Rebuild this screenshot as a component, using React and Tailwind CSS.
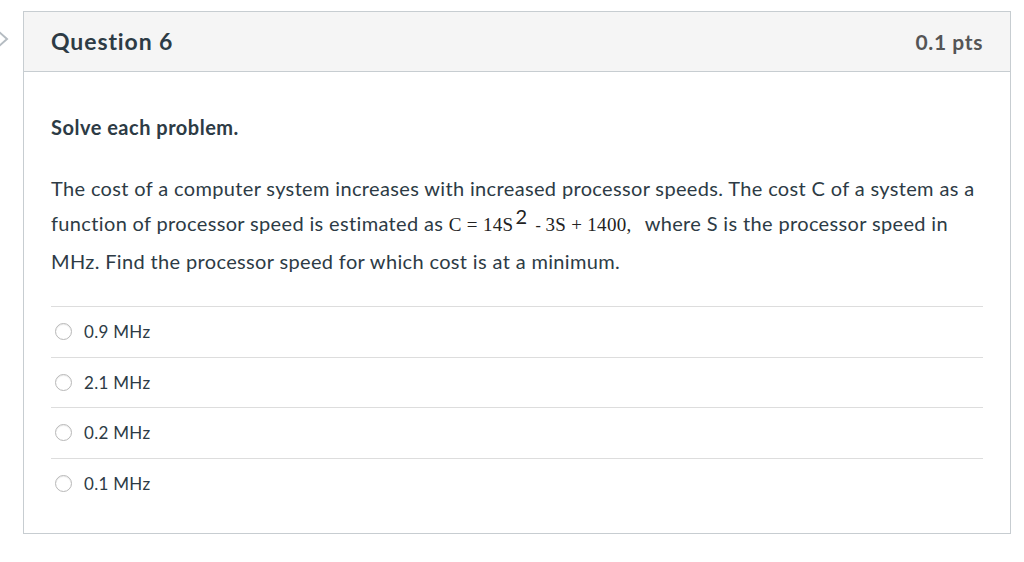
import React from "react";

const options = ["0.9 MHz", "2.1 MHz", "0.2 MHz", "0.1 MHz"];

const App = () => {
  return (
    <div
      className="relative w-[1024px] h-[562px] bg-white overflow-hidden"
      style={{ fontFamily: "Lato, 'Liberation Sans', sans-serif" }}
    >
      {/* previous-question chevron, cut off at the edge */}
      <svg className="absolute left-[-6px] top-[29px]" width="18" height="20" viewBox="0 0 18 20">
        <path d="M4 2 L13 10 L4 18" fill="none" stroke="#b5bcc2" strokeWidth="2" />
      </svg>

      <div className="ml-[23px] mt-[11px] w-[988px] h-[523px] border border-[#c7cdd1]">
        {/* Header */}
        <div className="h-[60px] bg-[#f5f5f5] border-b border-[#c7cdd1] flex items-center justify-between pl-[27px] pr-[27px]">
          <h2 className="text-[23px] font-bold text-[#2d3b45] tracking-[0.9px]">Question 6</h2>
          <span className="text-[21px] font-bold text-[#555555] tracking-[0.6px]">0.1 pts</span>
        </div>

        {/* Body */}
        <div className="px-[27px] pt-[42px] text-[#2d3b45]">
          <p className="text-[20px] font-bold leading-[26px] tracking-[0.5px]">Solve each problem.</p>

          <p className="mt-[31px] text-[20px] leading-[35px] tracking-[0.35px]">
            The cost of a computer system increases with increased processor speeds. The cost C of a system as a
            function of processor speed is estimated as{" "}
            <span
              className="inline-block text-[19px] leading-[36px] text-[#222] tracking-[0.3px] mr-[8px]"
              style={{ fontFamily: "'Liberation Serif', serif" }}
            >
              C = 14S
              <sup className="text-[20px] relative top-[-7px] ml-[2px] mr-[4px]" style={{ fontFamily: "Lato, sans-serif" }}>2</sup>
              <span className="text-[16px]"> - </span>3S + 1400,
            </span>{" "}
            where S is the processor speed in MHz. Find the processor speed for which cost is at a minimum.
          </p>

          <div className="mt-[27px]">
            {options.map((opt) => (
              <div key={opt} className="h-[50.5px] border-t border-[#dddddd] flex items-center pl-[4px]">
                <span className="w-[17px] h-[17px] rounded-full border border-[#b8b8b8] bg-white shadow-[inset_0_1px_1px_rgba(0,0,0,0.08)]" />
                <span className="ml-[12px] text-[17px] text-[#2d3b45] tracking-[0.3px]">{opt}</span>
              </div>
            ))}
          </div>
        </div>
      </div>
    </div>
  );
};

export default App;
